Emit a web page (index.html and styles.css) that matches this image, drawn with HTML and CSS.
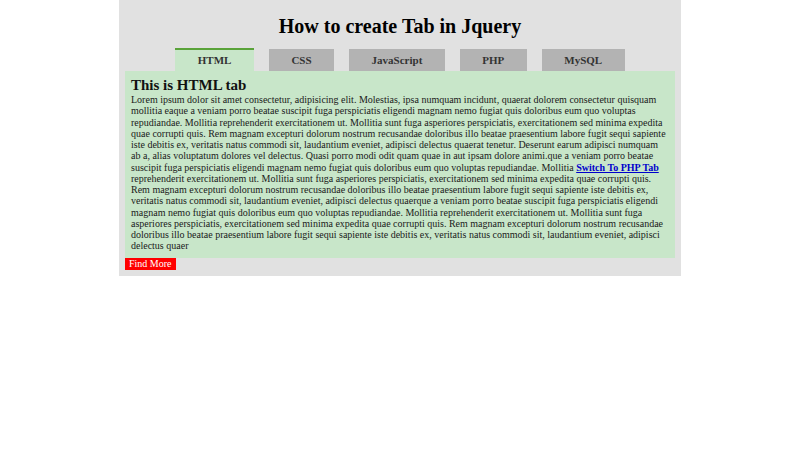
FILE: index.html
```html
<!DOCTYPE html>
<html lang="en">
<head>
    <meta charset="UTF-8">
    <meta name="viewport" content="width=device-width, initial-scale=1.0">
    <title>How to create Tab in Jquery</title>
    <link rel="stylesheet" href="styles.css">
</head>
<body>
    <div class="container">
        <h1 class="title">How to create Tab in Jquery</h1>
        <div class="tabs">
            <a class="tab active" href="#html">HTML</a>
            <a class="tab" href="#css">CSS</a>
            <a class="tab" href="#js">JavaScript</a>
            <a class="tab" href="#php">PHP</a>
            <a class="tab" href="#mysql">MySQL</a>
        </div>
        <div class="tab-content" id="html">
            <h2 class="tab-heading">This is HTML tab</h2>
            <p class="tab-text">Lorem ipsum dolor sit amet consectetur, adipisicing elit. Molestias, ipsa numquam incidunt, quaerat dolorem consectetur quisquam mollitia eaque a veniam porro beatae suscipit fuga perspiciatis eligendi magnam nemo fugiat quis doloribus eum quo voluptas repudiandae. Mollitia reprehenderit exercitationem ut. Mollitia sunt fuga asperiores perspiciatis, exercitationem sed minima expedita quae corrupti quis. Rem magnam excepturi dolorum nostrum recusandae doloribus illo beatae praesentium labore fugit sequi sapiente iste debitis ex, veritatis natus commodi sit, laudantium eveniet, adipisci delectus quaerat tenetur. Deserunt earum adipisci numquam ab a, alias voluptatum dolores vel delectus. Quasi porro modi odit quam quae in aut ipsam dolore animi.que a veniam porro beatae suscipit fuga perspiciatis eligendi magnam nemo fugiat quis doloribus eum quo voluptas repudiandae. Mollitia <a class="switch" href="#php">Switch To PHP Tab</a> reprehenderit exercitationem ut. Mollitia sunt fuga asperiores perspiciatis, exercitationem sed minima expedita quae corrupti quis. Rem magnam excepturi dolorum nostrum recusandae doloribus illo beatae praesentium labore fugit sequi sapiente iste debitis ex, veritatis natus commodi sit, laudantium eveniet, adipisci delectus quaerque a veniam porro beatae suscipit fuga perspiciatis eligendi magnam nemo fugiat quis doloribus eum quo voluptas repudiandae. Mollitia reprehenderit exercitationem ut. Mollitia sunt fuga asperiores perspiciatis, exercitationem sed minima expedita quae corrupti quis. Rem magnam excepturi dolorum nostrum recusandae doloribus illo beatae praesentium labore fugit sequi sapiente iste debitis ex, veritatis natus commodi sit, laudantium eveniet, adipisci delectus quaer</p>
        </div>
        <button class="find-more">Find More</button>
    </div>
</body>
</html>
```

FILE: styles.css
```css
body {
    margin: 0;
    font-family: "Liberation Serif", "Times New Roman", serif;
    background: #fff;
}

.container {
    width: 550px;
    margin: 0 auto;
    padding: 0 6px 6px;
    background-color: #e1e1e1;
}

.title {
    margin: 0;
    padding: 15px 0 10px;
    font-size: 20px;
    line-height: 23px;
    text-align: center;
    color: #000;
}

.tabs {
    display: flex;
    justify-content: center;
    align-items: flex-end;
    gap: 15px;
    height: 23px;
}

.tab {
    display: block;
    height: 22px;
    padding: 0 22.5px;
    line-height: 22px;
    font-size: 11px;
    font-weight: bold;
    color: #333;
    text-decoration: none;
    background-color: #b3b3b3;
}

.tab.active {
    height: 21px;
    line-height: 21px;
    border-top: 2px solid #5aa33a;
    background-color: #c8e6c9;
}

.tab-content {
    padding: 6px 6px 6px;
    background-color: #c8e6c9;
}

.tab-heading {
    margin: 0;
    font-size: 15px;
    line-height: 17px;
    color: #111;
}

.tab-text {
    margin: 0;
    font-size: 10px;
    line-height: 11.25px;
    color: #1a1a1a;
}

.switch {
    font-weight: bold;
    color: #0000cc;
}

.find-more {
    display: block;
    height: 12px;
    padding: 0 4px;
    border: none;
    font-family: "Liberation Serif", "Times New Roman", serif;
    font-size: 10px;
    line-height: 12px;
    color: #fff;
    background-color: #f00;
    cursor: pointer;
}
```
